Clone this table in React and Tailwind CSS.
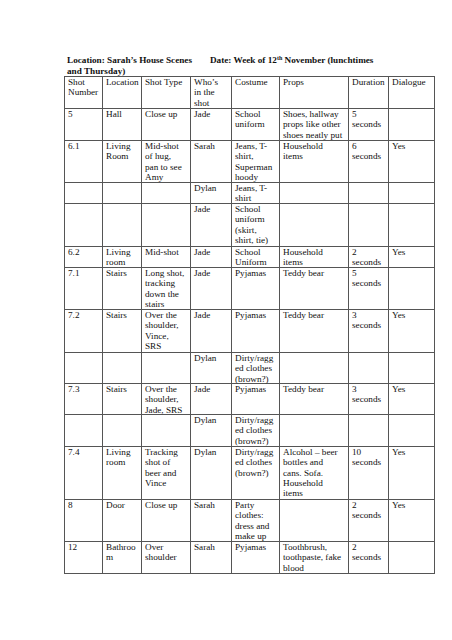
import React from 'react';

const cols = ["w-[38px]", "w-[39px]", "w-[49px]", "w-[41px]", "w-[48px]", "w-[69px]", "w-[40px]", "w-[46px]"];

const header = [["Shot", "Number"], ["Location"], ["Shot Type"], ["Who’s", "in the", "shot"], ["Costume"], ["Props"], ["Duration"], ["Dialogue"]];

const dylanRagged = [[], [], [], ["Dylan"], ["Dirty/ragg", "ed clothes", "(brown?)"], [], [], []];

const rows = [
    { h: "h-[32px]", cells: [["5"], ["Hall"], ["Close up"], ["Jade"], ["School", "uniform"], ["Shoes, hallway", "props like other", "shoes neatly put"], ["5", "seconds"], []] },
    { h: "h-[42px]", cells: [["6.1"], ["Living", "Room"], ["Mid-shot", "of hug,", "pan to see", "Amy"], ["Sarah"], ["Jeans, T-", "shirt,", "Superman", "hoody"], ["Household", "items"], ["6", "seconds"], ["Yes"]] },
    { h: "h-[21px]", cells: [[], [], [], ["Dylan"], ["Jeans, T-", "shirt"], [], [], []] },
    { h: "h-[43px]", cells: [[], [], [], ["Jade"], ["School", "uniform", "(skirt,", "shirt, tie)"], [], [], []] },
    { h: "h-[21px]", cells: [["6.2"], ["Living", "room"], ["Mid-shot"], ["Jade"], ["School", "Uniform"], ["Household", "items"], ["2", "seconds"], ["Yes"]] },
    { h: "h-[42px]", cells: [["7.1"], ["Stairs"], ["Long shot,", "tracking", "down the", "stairs"], ["Jade"], ["Pyjamas"], ["Teddy bear"], ["5", "seconds"], []] },
    { h: "h-[43px]", cells: [["7.2"], ["Stairs"], ["Over the", "shoulder,", "Vince,", "SRS"], ["Jade"], ["Pyjamas"], ["Teddy bear"], ["3", "seconds"], ["Yes"]] },
    { h: "h-[31px]", cells: dylanRagged },
    { h: "h-[31px]", cells: [["7.3"], ["Stairs"], ["Over the", "shoulder,", "Jade, SRS"], ["Jade"], ["Pyjamas"], ["Teddy bear"], ["3", "seconds"], ["Yes"]] },
    { h: "h-[32px]", cells: dylanRagged },
    { h: "h-[53px]", cells: [["7.4"], ["Living", "room"], ["Tracking", "shot of", "beer and", "Vince"], ["Dylan"], ["Dirty/ragg", "ed clothes", "(brown?)"], ["Alcohol – beer", "bottles and", "cans. Sofa.", "Household", "items"], ["10", "seconds"], ["Yes"]] },
    { h: "h-[42px]", cells: [["8"], ["Door"], ["Close up"], ["Sarah"], ["Party", "clothes:", "dress and", "make up"], [], ["2", "seconds"], ["Yes"]] },
    { h: "h-[32px]", cells: [["12"], ["Bathroo", "m"], ["Over", "shoulder"], ["Sarah"], ["Pyjamas"], ["Toothbrush,", "toothpaste, fake", "blood"], ["2", "seconds"], []] },
];

const Row = ({ h, cells }) => (
    <div className={`flex ${h} border-b border-[#555]`}>
        {cells.map((lines, i) => (
            <div key={i} className={`${cols[i]} shrink-0 border-r border-[#555] pl-[3px] whitespace-nowrap`}>
                {lines.map((l, j) => (
                    <div key={j}>{l}</div>
                ))}
            </div>
        ))}
    </div>
);

export default function App() {
    return (
        <div className="w-[452px] h-[640px] bg-white text-[#111] font-['Liberation_Serif','Times_New_Roman',serif] text-[9.2px] leading-[10.5px] pt-[55px] pl-[64px]">
            <div className="pl-[3px] font-bold whitespace-nowrap">
                <div>
                    Location: Sarah’s House Scenes
                    <span className="ml-[18px]">
                        Date: Week of 12<sup className="text-[6px]">th</sup> November (lunchtimes
                    </span>
                </div>
                <div>and Thursday)</div>
            </div>
            <div className="w-[371px] border-l border-t border-[#555] leading-[10.3px]">
                <Row h="h-[32px]" cells={header} />
                {rows.map((r, i) => (
                    <Row key={i} h={r.h} cells={r.cells} />
                ))}
            </div>
        </div>
    );
}
